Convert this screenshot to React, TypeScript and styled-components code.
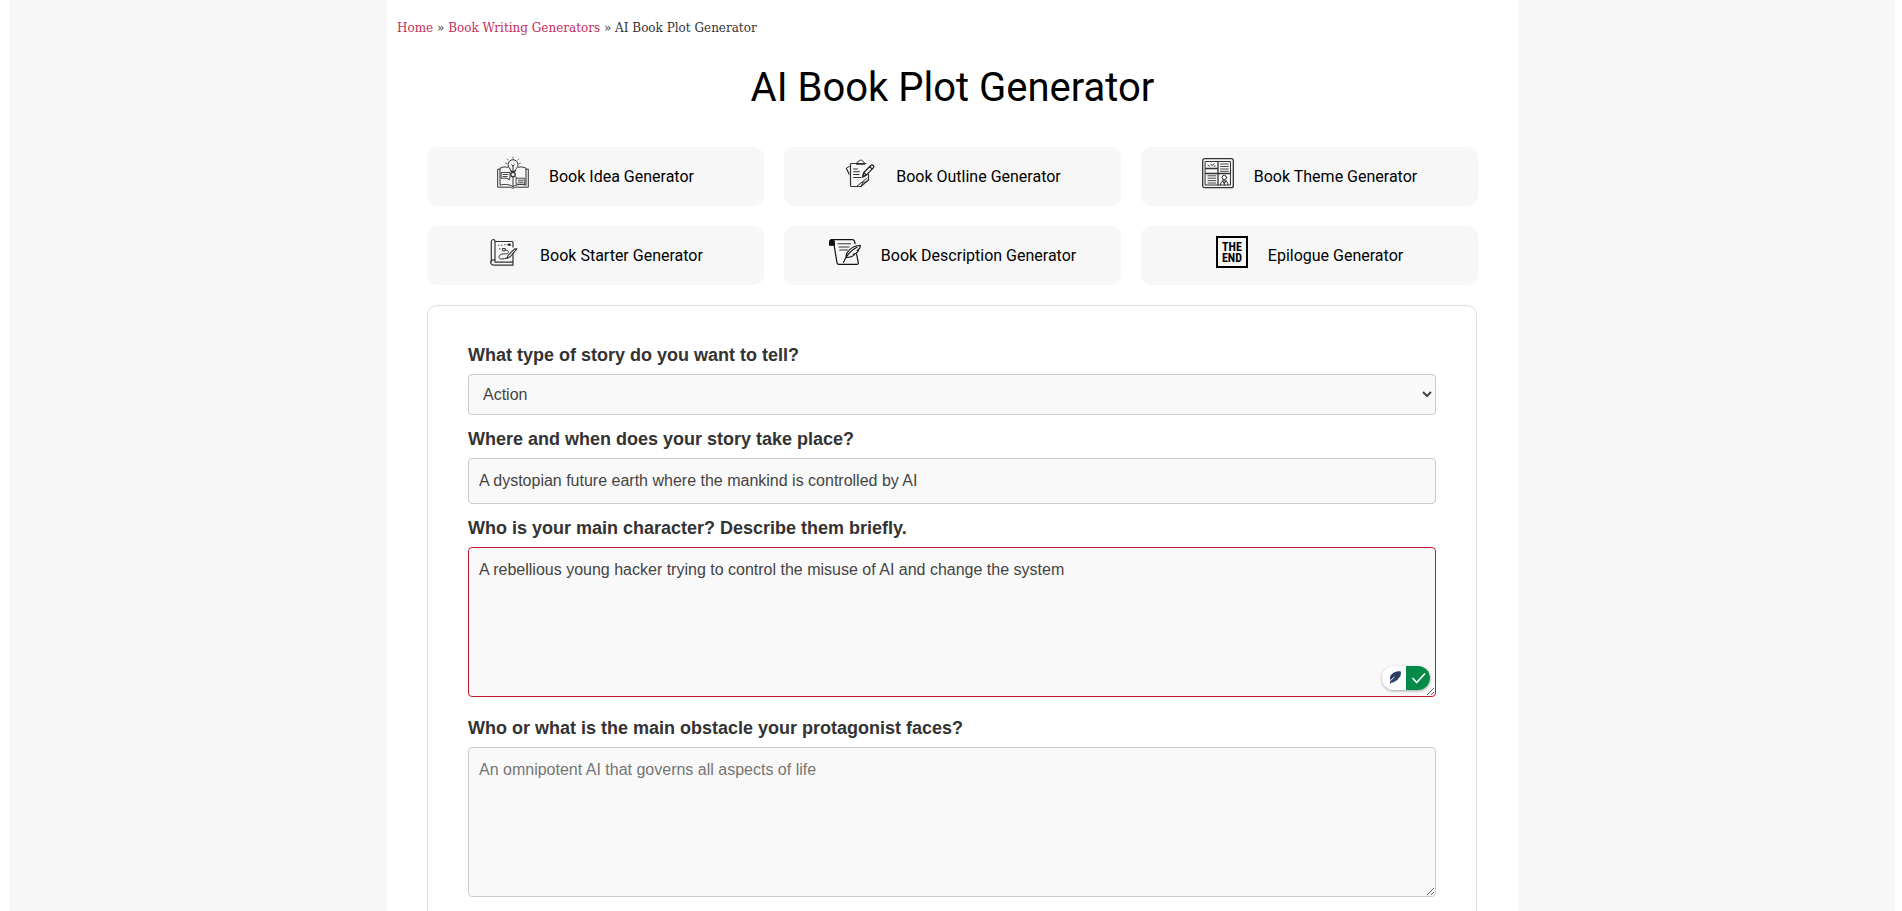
import React from "react";
import styled, { createGlobalStyle } from "styled-components";

const GlobalStyle = createGlobalStyle`
  *, *::before, *::after { box-sizing: border-box; }
  body { margin: 0; background: #fff; }
`;

const Page = styled.div`
  height: 100vh;
  overflow: hidden;
  padding: 0 7px 0 10px;
  background: #fff;
`;

const Backdrop = styled.div`
  min-height: 100%;
  background: #f7f7f7;
`;

const Column = styled.main`
  width: 60%;
  min-height: 100vh;
  margin: 0 auto;
  padding-top: 16px;
  background: #fff;
`;

const Breadcrumb = styled.nav`
  padding: 0 10px;
  font: 12px/24px "Roboto Slab", "DejaVu Serif", serif;
  color: #333;
`;

const Crumb = styled.a`
  color: #c72c5b;
  text-decoration: none;
`;

const Title = styled.h1`
  margin: 23px 0 34px;
  font: 400 40px/50px Roboto, sans-serif;
  text-align: center;
  color: #000;
`;

const Content = styled.div`
  padding: 0 40px;
`;

const CardGrid = styled.div`
  display: grid;
  grid-template-columns: repeat(3, 1fr);
  gap: 20px;
`;

const Card = styled.a`
  display: flex;
  justify-content: center;
  align-items: flex-start;
  gap: 20px;
  padding: 10px 10px 9px;
  border-radius: 10px;
  background: #f7f7f7;
  font: 400 16px/40px Roboto, sans-serif;
  color: #000;
  text-decoration: none;
`;

const CardIcon = styled.svg`
  flex: none;
  width: 32px;
  height: 32px;
  overflow: visible;
  fill: none;
  stroke: #333;
  stroke-width: 1;
  stroke-linecap: round;
  stroke-linejoin: round;
`;

const EndLettering = styled.text`
  font: 700 12px "Roboto Condensed", Roboto, sans-serif;
  fill: #000;
  stroke: none;
  text-anchor: middle;
`;

const Form = styled.form`
  display: flex;
  flex-direction: column;
  gap: 10px;
  margin-top: 20px;
  max-width: 1050px;
  padding: 35px 40px;
  border: 1px solid #ddd;
  border-radius: 10px;
`;

const Field = styled.div<{ $tall?: boolean }>`
  position: relative;
  display: flex;
  flex-direction: column;
  padding-bottom: ${(p) => (p.$tall ? "7px" : "0")};
`;

const Label = styled.label`
  margin-bottom: 5px;
  font: 700 18px/28px "Liberation Sans", Arial, sans-serif;
  color: #333;
`;

const controlFont = `
  width: 100%;
  border-radius: 4px;
  background: #f9f9f9;
  font: 400 16px/24px "Liberation Sans", Arial, sans-serif;
  color: #444;
  outline: none;
`;

const Select = styled.select`
  ${controlFont}
  height: 41px;
  padding: 0 10px;
  padding-right: 0;
  border: 1px solid #ccc;
`;

const TextInput = styled.input`
  ${controlFont}
  height: 46px;
  padding: 10px;
  border: 1px solid #ccc;
`;

const TextArea = styled.textarea<{ $active?: boolean }>`
  ${controlFont}
  display: block;
  height: 150px;
  padding: 10px;
  border: 1px solid ${(p) => (p.$active ? "#c11a2f" : "#ccc")};
  resize: vertical;

  &::placeholder { color: #757575; }
`;

const Checker = styled.div`
  position: absolute;
  right: 6px;
  bottom: 14px;
  display: flex;
  border-radius: 12px;
  overflow: hidden;
  background: #fff;
  box-shadow: 0 1px 3px rgba(0, 0, 0, 0.35);
`;

const CheckerButton = styled.button<{ $green?: boolean }>`
  width: 24px;
  height: 24px;
  padding: 0;
  border: 0;
  background: ${(p) => (p.$green ? "#058a47" : "#fff")};

  svg { display: block; }
`;

const IdeaIcon = () => (
  <CardIcon viewBox="0 -1 32 32" aria-hidden="true">
    <path d="M12.6 10.4a5 5 0 1 1 6.8 0c-.8.8-1 1.600-1 2.600h-4.800c0-1-.2-1.800-1-2.600Z" />
    <path d="M14 13.500h4M16 12V8M14.800 6.800 16 8.200l1.200-1.400" />
    <path d="M16-.8V.4M10.300 1l.8 1M21.700 1l-.8 1M8.500 5.200l1.200.4M23.500 5.200l-1.200.4" strokeWidth=".7" />
    <path d="M10.500 9.300C8 8.500 5.500 9 3 10.200v17c4-1.200 9-1.200 13 1.500 4-2.700 9-2.700 13-1.500v-17c-2.500-1.200-5-1.700-7.500-.9" />
    <path d="M3 11.200H.7v18H13c1 0 1.500 1 3 1s2-1 3-1h12.300v-18H29M16 18.500v10" />
    <circle cx="16" cy="16.500" r="2.200" strokeWidth="1.300" />
    <path d="M4.500 14.500H13v5.700h-1l.2 1.800-2.200-1.800H4.500zM6 16.500h5M6 18.500h4" strokeWidth=".9" />
    <path d="M19.500 20.200h8.300v6h-8.300zM21.300 22.200h5M21.300 24.200h5M19.500 20.200l-1-1.500" strokeWidth=".9" />
  </CardIcon>
);

const OutlineIcon = () => (
  <CardIcon viewBox="0 -1 32 32" aria-hidden="true">
    <path d="M6.500 6.500v21.200c0 .5.300.8.800.8H17l7.500-6.700v-5.500M6.500 6.300C6.500 5.800 7 5.500 7.500 5.500H22" strokeWidth="1.200" />
    <path d="M12.500 5.500c0-1.200.8-1.500 2-1.500 0-2.500 4.600-2.500 4.600 0 1 0 1.500.5 1.500 1.500M12.500 6.300h8" />
    <path d="M17 28.200l2-4.200c1.800.5 4 .2 5.500-1.800M12.500 28.500l10-8" />
    <path d="M5.500 8.500 2.300 10l2.800 6.500M5 15l-2.700-4.500" />
    <path d="M9.500 11h4M9.500 13.700h6M9.500 16.500h5.500M9.500 19.500h7.500" />
    <path d="m18.500 18.800 1.300-4.300 7.300-7.300c1.300-1.100 3.600 1 2.400 2.400l-7.200 7.500zM19.800 14.500l2.500 2.600M25.700 8.600l2.500 2.500" strokeWidth="1.300" stroke="#222" />
    <path d="m18.500 18.800.6-2 1.400 1.400z" fill="#222" />
  </CardIcon>
);

const ThemeIcon = () => (
  <CardIcon viewBox="0 -1 32 32" aria-hidden="true">
    <rect x=".7" y=".7" width="30.600" height="29" rx="2" strokeWidth="1.300" />
    <rect x="3.500" y="3.500" width="25" height="23.500" strokeWidth="1" />
    <path d="M16 3.500V27M3.500 15.500h25M3.500 10.500H16" strokeWidth="1.300" />
    <path d="M6 7.200l1.300 1M9 6.300l1 1.400 2-2M12 8h1" />
    <path d="M18.500 6h7.800M18.500 8.500h7.800M18.500 11h7.800M18.500 13.300h7.800M6 17.800h7.800M6 20.200h7.800M6 22.600h7.800M6 25h7.800" strokeWidth=".9" />
    <circle cx="22.300" cy="19.500" r="2.200" />
    <path d="M18.500 27c0-6 7.600-6 7.600 0M20.500 22.700l1.800 3 1.800-3M22.300 24v3" />
  </CardIcon>
);

const StarterIcon = () => (
  <CardIcon viewBox="0 0 32 32" aria-hidden="true">
    <path d="M7 5.500h17c.6 0 1 .4 1 1V11M25 17.500v8.700M7 26.200h17.200c.4 0 .8.400.8.800v2.200H6c-3.700 0-3.700-3.200-2.700-5V6c0-3 3.700-3.500 3.700-.5v18.700c-1.700-.8-3.700-.2-3.700 1.800M7 24.200v2" strokeWidth="1.200" />
    <path d="M10.500 9.200h.6M13.500 9.200h.6M16.500 8.700h.6M19 8.700h.6" strokeWidth=".9" />
    <path d="M20.800 8h1.500v1.500h-1.500z" fill="#222" />
    <path d="M11.500 12.800h.6M14.800 12.500h2.400v2.300h-2.400zM17.200 14c3 0 4.500 2.500 2.300 3.500-2.500 1-6-.5-8 2-1.500 2 0 3.800 2.500 3.500 2 0 3-.5 4.500-1" />
    <path d="m18.800 22.500 1.400-3.200 6.600-6.600 2 .2-6.300 7.600z" strokeWidth="1.100" />
  </CardIcon>
);

const DescriptionIcon = () => (
  <CardIcon viewBox="0 0 32 32" aria-hidden="true">
    <path d="M3 3.700h20.500c1.500 0 2 .8 2.200 2l.3 2M5 8.500l3 18.300c.2 1 .8 1.500 2 1.500h18.200c1.300 0 1.300-1 1-2l-1.500-8" strokeWidth="1.200" stroke="#111" />
    <path d="M.5 9V5.700C.5 4 1.500 3.500 3 3.500c1.700 0 2.500 1 2.500 3V9z" fill="#111" stroke="#111" />
    <path d="M9 7.700h12.500M10 11h10M10.700 14h7.800" strokeWidth="1.100" />
    <path d="M14.500 26.500c1.500-4 3.300-6.800 6-9.700M17 21.700c-.4-5.700 5.500-12 14.500-12.200-.3 2.200-1.500 4.200-3.300 5l1.200.2c-1.200 2.300-3 3.300-5.300 3.600l1.200.6c-1.800 1.800-5 2.500-8.300 2.800ZM20.500 16.800c2.200-2.300 4.500-4 7.500-5.500" strokeWidth="1.100" stroke="#111" />
  </CardIcon>
);

const EpilogueIcon = () => (
  <CardIcon viewBox="0 0 32 32" aria-hidden="true">
    <rect x="1" y="1" width="30" height="30" strokeWidth="2" stroke="#000" strokeLinejoin="miter" />
    <EndLettering x="16" y="15">THE</EndLettering>
    <EndLettering x="16" y="26">END</EndLettering>
  </CardIcon>
);

const generators = [
  { name: "Book Idea Generator", Icon: IdeaIcon },
  { name: "Book Outline Generator", Icon: OutlineIcon },
  { name: "Book Theme Generator", Icon: ThemeIcon },
  { name: "Book Starter Generator", Icon: StarterIcon },
  { name: "Book Description Generator", Icon: DescriptionIcon },
  { name: "Epilogue Generator", Icon: EpilogueIcon },
];

export default function App() {
  return (
    <Page>
      <GlobalStyle />
      <Backdrop>
        <Column>
          <Breadcrumb aria-label="Breadcrumb">
            <Crumb href="#">Home</Crumb> » <Crumb href="#">Book Writing Generators</Crumb> » AI Book Plot Generator
          </Breadcrumb>
          <Title>AI Book Plot Generator</Title>
          <Content>
            <CardGrid>
              {generators.map(({ name, Icon }) => (
                <Card href="#" key={name}>
                  <Icon />
                  {name}
                </Card>
              ))}
            </CardGrid>
            <Form>
              <Field>
                <Label htmlFor="genre">What type of story do you want to tell?</Label>
                <Select id="genre" defaultValue="Action">
                  <option>Action</option>
                </Select>
              </Field>
              <Field>
                <Label htmlFor="setting">Where and when does your story take place?</Label>
                <TextInput
                  id="setting"
                  type="text"
                  defaultValue="A dystopian future earth where the mankind is controlled by AI"
                />
              </Field>
              <Field $tall>
                <Label htmlFor="character">Who is your main character? Describe them briefly.</Label>
                <TextArea
                  id="character"
                  $active
                  spellCheck={false}
                  defaultValue="A rebellious young hacker trying to control the misuse of AI and change the system"
                />
                <Checker>
                  <CheckerButton type="button" aria-label="Rephrase">
                    <svg width="24" height="24" viewBox="0 0 24 24">
                      <path
                        d="M8 18.200c-.3-1.500 0-2.700.7-3.800-1.900-3.300.3-6.500 3.800-8.200 2-1 4.300-1.200 6.200-.8.700 2.300-.1 4.600-1.500 6.300l-1.500.5 1 .4c-.9 1.200-2 2-3.200 2.600l-1.800.2.700.5c-.9.500-1.800.6-2.600.4z"
                        fill="#2c3d63"
                      />
                      <path d="M8.700 14.400 12.500 11" stroke="#fff" strokeWidth="1" />
                    </svg>
                  </CheckerButton>
                  <CheckerButton type="button" $green aria-label="No mistakes found">
                    <svg width="24" height="24" viewBox="0 0 24 24">
                      <path d="m6.500 12 4.200 4.500L19 7.500" fill="none" stroke="#fff" strokeWidth="1.600" />
                    </svg>
                  </CheckerButton>
                </Checker>
              </Field>
              <Field $tall>
                <Label htmlFor="obstacle">Who or what is the main obstacle your protagonist faces?</Label>
                <TextArea id="obstacle" placeholder="An omnipotent AI that governs all aspects of life" />
              </Field>
            </Form>
          </Content>
        </Column>
      </Backdrop>
    </Page>
  );
}
